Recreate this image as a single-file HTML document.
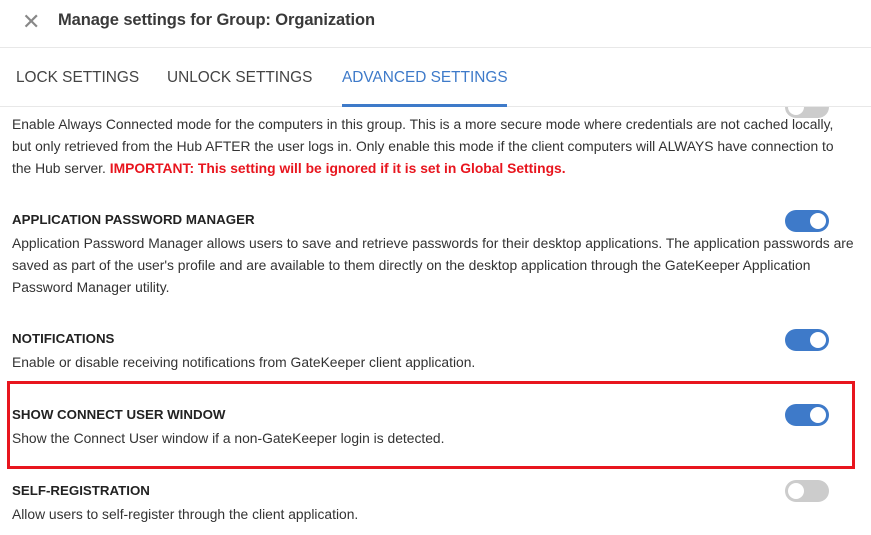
<!DOCTYPE html>
<html><head><style>
body{margin:0;width:871px;height:535px;overflow:hidden;background:#fff;font-family:"Liberation Sans",sans-serif;color:#333;position:relative}
.a{position:absolute;white-space:nowrap}
.p{font-size:13.85px;line-height:22px;color:#333}
.h{font-size:13.3px;font-weight:bold;color:#222}
.t{position:absolute;left:785px;width:44px;height:22px;border-radius:11px;background:#3e7ac9}
.t::after{content:"";position:absolute;right:3px;top:3px;width:16px;height:16px;border-radius:50%;background:#fff}
.t.off{background:#ccc}
.t.off::after{left:3px;right:auto}
</style></head><body>
<div class="a" style="left:22px;top:9px;font-size:22px;color:#888">✕</div>
<div class="a" style="left:58px;top:11px;font-size:16.5px;font-weight:bold;color:#3a3a3a;letter-spacing:-0.1px">Manage settings for Group: Organization</div>
<div class="a" style="left:0;top:47px;width:871px;height:1px;background:#e8e8e8"></div>
<div class="a" style="left:16px;top:69px;font-size:15.4px;color:#444">LOCK SETTINGS</div>
<div class="a" style="left:167px;top:69px;font-size:15.4px;color:#444">UNLOCK SETTINGS</div>
<div class="a" style="left:342px;top:69px;font-size:15.4px;color:#3e7ac9">ADVANCED SETTINGS</div>
<div class="a" style="left:0;top:106px;width:871px;height:1px;background:#e8e8e8"></div>
<div class="a" style="left:342px;top:104px;width:165px;height:3px;background:#3e7ac9"></div>
<div class="t off" style="top:96px;clip-path:inset(11px 0 0 0)"></div>
<div class="a p" style="left:12px;top:113px">Enable Always Connected mode for the computers in this group. This is a more secure mode where credentials are not cached locally,<br>but only retrieved from the Hub AFTER the user logs in. Only enable this mode if the client computers will ALWAYS have connection to<br>the Hub server. <span style="color:#e8151e;font-weight:bold">IMPORTANT: This setting will be ignored if it is set in Global Settings.</span></div>
<div class="a h" style="left:12px;top:212px">APPLICATION PASSWORD MANAGER</div>
<div class="t" style="top:210px"></div>
<div class="a p" style="left:12px;top:232px">Application Password Manager allows users to save and retrieve passwords for their desktop applications. The application passwords are<br>saved as part of the user's profile and are available to them directly on the desktop application through the GateKeeper Application<br>Password Manager utility.</div>
<div class="a h" style="left:12px;top:331px">NOTIFICATIONS</div>
<div class="t" style="top:329px"></div>
<div class="a p" style="left:12px;top:351px">Enable or disable receiving notifications from GateKeeper client application.</div>
<div class="a" style="left:7px;top:381px;width:842px;height:82px;border:3px solid #e8151e"></div>
<div class="a h" style="left:12px;top:407px">SHOW CONNECT USER WINDOW</div>
<div class="t" style="top:404px"></div>
<div class="a p" style="left:12px;top:427px">Show the Connect User window if a non-GateKeeper login is detected.</div>
<div class="a h" style="left:12px;top:483px">SELF-REGISTRATION</div>
<div class="t off" style="top:480px"></div>
<div class="a p" style="left:12px;top:503px">Allow users to self-register through the client application.</div>
</body></html>
